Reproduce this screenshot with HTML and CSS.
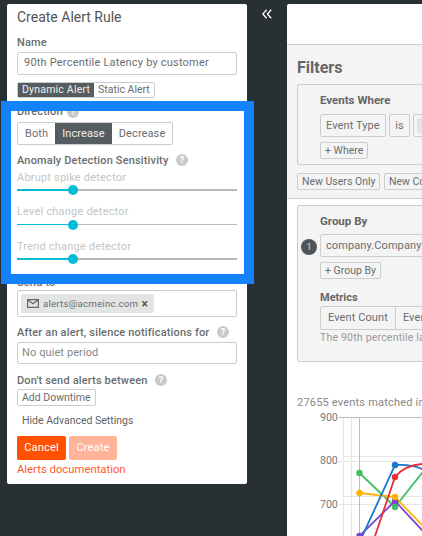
FILE: index.html
```html
<!DOCTYPE html>
<html lang="en">
<head>
<meta charset="utf-8">
<title>Create Alert Rule</title>
<link rel="stylesheet" href="styles.css">
</head>
<body>
<div class="page">
  <aside class="card">
    <h1 class="title">Create Alert Rule</h1>
    <label class="label name-label">Name</label>
    <div class="input name-input">90th Percentile Latency by customer</div>
    <div class="seg type-seg">
      <span class="seg-item active">Dynamic Alert</span><span class="seg-item static">Static Alert</span>
    </div>
    <div class="label direction-label">Direction <svg class="help" viewBox="0 0 12 12"><circle cx="6" cy="6" r="6"/><text x="6" y="9.2" text-anchor="middle">?</text></svg></div>
    <div class="seg dir-seg">
      <span class="seg-item">Both</span><span class="seg-item active">Increase</span><span class="seg-item">Decrease</span>
    </div>
    <div class="label sens-label">Anomaly Detection Sensitivity <svg class="help help-wide" viewBox="0 0 12 12"><circle cx="6" cy="6" r="6"/><text x="6" y="9.2" text-anchor="middle">?</text></svg></div>
    <div class="slider-label first">Abrupt spike detector</div>
    <div class="slider thick"><span class="fill"></span><span class="thumb"></span></div>
    <div class="slider-label">Level change detector</div>
    <div class="slider thin"><span class="fill"></span><span class="thumb"></span></div>
    <div class="slider-label">Trend change detector</div>
    <div class="slider thick"><span class="fill"></span><span class="thumb"></span></div>
    <div class="label send-label">Send to</div>
    <div class="input tag-input">
      <span class="tag">
        <svg class="mail" viewBox="0 0 12 9"><path d="M.6.6h10.8v7.8H.6z M.6.8 6 4.8 11.4.8"/></svg>
        alerts@acmeinc.com
        <b class="tag-x">×</b>
      </span>
    </div>
    <div class="label after-label">After an alert, silence notifications for <svg class="help help-wide" viewBox="0 0 12 12"><circle cx="6" cy="6" r="6"/><text x="6" y="9.2" text-anchor="middle">?</text></svg></div>
    <div class="input quiet-input">No quiet period</div>
    <div class="label dont-label">Don't send alerts between <svg class="help help-wide" viewBox="0 0 12 12"><circle cx="6" cy="6" r="6"/><text x="6" y="9.2" text-anchor="middle">?</text></svg></div>
    <div class="small-btn downtime">Add Downtime</div>
    <div class="hide-link">Hide Advanced Settings</div>
    <div class="actions">
      <span class="btn cancel">Cancel</span>
      <span class="btn create">Create</span>
    </div>
    <div class="docs">Alerts documentation</div>
  </aside>
  <div class="collapse">
    <svg viewBox="0 0 10 10"><path d="M4.6.8.8 5l3.8 4.2M9.2.8 5.4 5l3.8 4.2"/></svg>
  </div>
  <main class="panel">
    <div class="panel-top"></div>
    <section class="filters">
      <h2 class="filters-title">Filters</h2>
      <div class="box where-box">
        <div class="box-head">Events Where</div>
        <div class="row">
          <span class="chip">Event Type</span>
          <span class="chip">is</span>
          <span class="chip chip-val"><i></i></span>
        </div>
        <span class="small-btn add-where">+ Where</span>
      </div>
      <div class="row quick">
        <span class="small-btn">New Users Only</span>
        <span class="small-btn">New Companies Only</span>
      </div>
    </section>
    <section class="group">
      <div class="box group-box">
        <div class="box-head">Group By</div>
        <div class="row group-row">
          <span class="badge">1</span>
          <span class="chip">company.Company Name</span>
        </div>
        <span class="small-btn add-group">+ Group By</span>
        <div class="metrics-head">Metrics</div>
        <div class="metric-seg"><span>Event Count</span><span>Event Property</span></div>
        <p class="desc">The 90th percentile latency by customer</p>
      </div>
    </section>
    <section class="results">
      <div class="matched">27655 events matched in the last 7 days</div>
      <div class="chart">
        <div class="ticks"><span>900</span><span>800</span><span>700</span></div>
        <svg class="plot" viewBox="-5 0 110 119">
          <g class="grid">
            <path d="M.5 0v119M8.5 0v119"/>
            <path d="M0 39.5h110M-5 44.5h115M0 79.5h110M-5 87.5h115"/>
            <path d="M-5 .5h115M16.5 0v119" class="strong"/>
          </g>
          <g class="series">
            <path class="s-green" d="M16.5 56 52 90 79 56 110 40"/>
            <path class="s-purple" d="M16.5 119 52 84 79 113 110 140"/>
            <path class="s-yellow" d="M16.5 76 52 80 79 108 110 140"/>
            <path class="s-blue" d="M18 122 52 48Q68 47 79 52L110 70"/>
            <path class="s-red" d="M31 122 52 60Q62 48 79 47L110 50"/>
          </g>
          <g class="dots">
            <circle class="d-purple" cx="16.5" cy="119" r="3.2"/>
            <circle class="d-green" cx="16.5" cy="56" r="3.2"/>
            <circle class="d-yellow" cx="16.5" cy="76" r="3.2"/>
            <circle class="d-green" cx="52" cy="90" r="3.2"/>
            <circle class="d-purple" cx="52" cy="84" r="3.2"/>
            <circle class="d-yellow" cx="52" cy="80" r="3.2"/>
            <circle class="d-blue" cx="52" cy="48" r="3.2"/>
            <circle class="d-red" cx="52" cy="60" r="3.2"/>
          </g>
        </svg>
      </div>
    </section>
  </main>
</div>
<div class="highlight"></div>
</body>
</html>
```
FILE: styles.css
```css
* { box-sizing: border-box; }
html, body { margin: 0; height: 100%; }
body {
  width: 422px; height: 536px; overflow: hidden; position: relative;
  background: #283034; color: #5f6364;
  font-family: Roboto, "Liberation Sans", sans-serif; font-size: 11px;
}
.page { display: flex; align-items: flex-start; padding-top: 4px; padding-left: 7px; height: 536px; }
.card {
  width: 240px; height: 480px; flex: none; background: #fff; border-radius: 2px;
  padding: 0 10px;
}
.title { margin: 5px 0 0; font-size: 14px; font-weight: 400; line-height: 17px; color: #555; }
.label { font-size: 11px; font-weight: 500; line-height: 13px; color: #6a6d6e; display: flex; align-items: center; white-space: nowrap; letter-spacing: .16px; }
.name-label { margin-top: 9.5px; }
.input { border: 1px solid #c9cdcd; border-radius: 2px; background: #fff; width: 220px; font-size: 11px; color: #6b6e6f; letter-spacing: .2px; }
.name-input { height: 23px; line-height: 20px; padding-left: 6px; margin-top: 3.5px; }
.seg { display: flex; width: max-content; border: 1px solid #c9cdcd; border-radius: 2px; }
.seg-item { padding: 0 4px; color: #6b6e6f; font-size: 10.5px; letter-spacing: .2px; }
.seg-item.static { letter-spacing: 0; }
.seg-item.active { background: #565d60; color: #eee; }
.type-seg { margin-top: 7px; height: 16px; line-height: 14px; }
.direction-label { margin-top: 7px; gap: 4px; }
.help { width: 12px; height: 12px; flex: none; }
.help circle { fill: #c9c9c9; }
.help text { fill: #fff; font: 700 9px Roboto, sans-serif; }
.help-wide { margin-left: 7.5px; }
.dir-seg { margin-top: 4px; height: 23px; line-height: 21px; }
.dir-seg .seg-item { padding: 0 7px; font-size: 11px; letter-spacing: .1px; }
.sens-label { margin-top: 8.5px; }
.slider-label { font-size: 11px; line-height: 13px; color: #c4c5c5; letter-spacing: .2px; margin-top: 8.5px; white-space: nowrap; }
.slider-label.first { margin-top: 4px; }
.slider { position: relative; height: 13px; width: 220px; display: flex; align-items: center; background: linear-gradient(#b9b9b9, #b9b9b9) center / 100% 2px no-repeat; }
.slider.thin { background-size: 100% 1px; }
.slider .fill { display: block; width: 56px; height: 2px; background: #00bcd4; }
.slider.thin .fill { height: 1px; }
.thumb { position: absolute; left: 51px; top: 1.5px; width: 10px; height: 10px; border-radius: 50%; background: #00bcd4; }
.send-label { margin-top: 10px; }
.tag-input { height: 27px; margin-top: 1.5px; padding: 3px 3px; }
.tag { display: inline-flex; align-items: center; width: 133px; height: 19px; background: #e3e4e4; border-radius: 2px; padding: 0 6px; font-size: 9.7px; color: #6b6e6f; white-space: nowrap; }
.mail { width: 12px; height: 9px; margin-right: 4px; flex: none; fill: none; stroke: #666; stroke-width: 1.2; }
.tag-x { margin-left: auto; font-size: 12px; color: #555; }
.after-label { margin-top: 8.5px; }
.quiet-input { height: 22px; line-height: 19px; padding-left: 4px; margin-top: 3.5px; color: #888; letter-spacing: .1px; }
.dont-label { margin-top: 9.5px; }
.small-btn { display: inline-block; border: 1px solid #c9cdcd; border-radius: 2px; height: 17px; line-height: 15px; padding: 0 4px; font-size: 10.5px; color: #6b6e6f; white-space: nowrap; background: #fff; }
.downtime { display: block; width: max-content; margin-top: 2.5px; }
.hide-link { margin: 7.5px 0 0 5px; line-height: 13px; font-size: 10.5px; color: #5f6364; }
.actions { display: flex; gap: 3px; margin-top: 9.5px; }
.btn { height: 24px; line-height: 24px; border-radius: 2px; color: #fff; font-size: 11px; letter-spacing: .2px; text-align: center; }
.cancel { width: 49px; background: #ff5100; }
.create { width: 48px; background: #ffb49a; }
.docs { margin-top: 3px; color: #ff5a1f; font-size: 11.3px; line-height: 14px; }
.collapse { width: 40px; flex: none; display: flex; justify-content: center; padding-top: 5px; }
.collapse svg { width: 10px; height: 10px; fill: none; stroke: #fff; stroke-width: 1.3; }
.panel { width: 135px; height: 532px; flex: none; overflow: hidden; background: #fff; border-radius: 2px 0 0 0; }
.panel-top { height: 41px; border-bottom: 1px solid #c9cdcd; }
.filters { background: #f4f4f4; height: 154px; padding: 0 10px; width: 300px; border-bottom: 1px solid #c9cdcd; }
.filters-title { margin: 0; padding-top: 13px; font-size: 16px; font-weight: 700; line-height: 20px; color: #666; }
.box { border: 1px solid #c9cdcd; border-radius: 2px; width: 300px; background: #f4f4f4; }
.where-box { height: 81px; margin-top: 6px; padding: 8px 0 0 22px; }
.box-head { font-size: 11.5px; font-weight: 700; color: #666; line-height: 14px; }
.row { display: flex; white-space: nowrap; }
.chip { display: block; height: 23px; line-height: 21px; border: 1px solid #c9cdcd; border-radius: 2px; padding: 0 5px; margin-right: 3.5px; font-size: 11px; color: #6b6e6f; letter-spacing: .1px; background: #f4f4f4; flex: none; }
.where-box .row { margin-top: 7px; }
.chip-val { width: 60px; padding: 3px; }
.chip-val i { display: block; width: 40px; height: 15px; background: #e3e4e4; border-radius: 2px; }
.add-where { display: block; width: max-content; margin-top: 5px; background: #f4f4f4; }
.quick { gap: 3.5px; margin-top: 8px; }
.quick .small-btn { background: #f4f4f4; }
.group { background: #fff; width: 300px; height: 168px; padding: 6px 10px 0; }
.group-box { height: 157px; padding: 8px 0 0 22px; position: relative; }
.group-row { margin-top: 6px; }
.badge { position: absolute; left: 3px; top: 33px; width: 16px; height: 16px; border-radius: 50%; background: #4f5659; color: #ddd; font-size: 9px; line-height: 16px; text-align: center; }
.add-group { display: block; width: max-content; margin-top: 5px; background: #f4f4f4; }
.metrics-head { font-size: 11px; font-weight: 700; color: #666; line-height: 13px; margin-top: 11.5px; }
.metric-seg { display: flex; height: 24px; width: 200px; line-height: 22px; margin-top: 2.5px; border: 1px solid #c9cdcd; border-radius: 2px; white-space: nowrap; font-size: 11px; letter-spacing: .1px; color: #6b6e6f; }
.metric-seg span { padding: 0 7px; border-right: 1px solid #c9cdcd; }
.desc { margin: 1px 0 0; font-size: 10.5px; line-height: 14px; letter-spacing: .2px; color: #999; white-space: nowrap; }
.results { background: #fff; height: 170px; width: 300px; padding: 0 0 0 10px; }
.matched { padding-top: 29px; font-size: 11px; line-height: 14px; color: #888; letter-spacing: .2px; white-space: nowrap; }
.chart { display: flex; margin-top: .5px; height: 130px; margin-left: 23px; }
.ticks { width: 18px; flex: none; display: flex; flex-direction: column; gap: 29.5px; font-size: 10.5px; line-height: 14px; color: #777; }
.plot { width: 110px; height: 119px; margin-top: 6.5px; flex: none; overflow: hidden; }
.grid path { fill: none; stroke: #e6e6e6; stroke-width: 1; }
.grid path.strong { stroke: #bdbdbd; }
.series path { fill: none; stroke-width: 1.8; }
.s-green { stroke: #3fbf5f; }
.s-yellow { stroke: #ffb300; }
.s-purple { stroke: #7b45d6; }
.s-blue { stroke: #1976d2; }
.s-red { stroke: #e5303a; }
.d-green { fill: #3fbf5f; }
.d-yellow { fill: #ffb300; }
.d-purple { fill: #7b45d6; }
.d-blue { fill: #1976d2; }
.d-red { fill: #e5303a; }
.highlight { position: absolute; left: 1px; top: 101px; width: 253px; height: 183px; border: 10px solid #1482fb; }
```
